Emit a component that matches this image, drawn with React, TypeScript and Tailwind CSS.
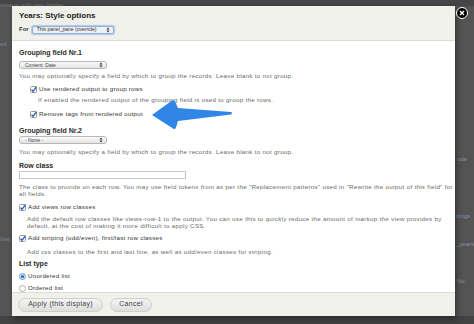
import React from 'react';

const font = { fontFamily: '"Liberation Sans", Arial, sans-serif' };

function Check({ checked = true }: { checked?: boolean }) {
  return (
    <svg width="7" height="7" viewBox="0 0 7 7" className="shrink-0">
      <rect x="0.5" y="0.5" width="6" height="6" rx="1" fill="#fff" stroke="#9a9a9a" />
      {checked && <path d="M1.5 3.6 L3 5.4 L6.6 0.6" stroke="#2a62c9" strokeWidth="1.4" fill="none" />}
    </svg>
  );
}

function Radio({ on }: { on?: boolean }) {
  return (
    <svg width="7" height="7" viewBox="0 0 7 7" className="shrink-0">
      <circle cx="3.5" cy="3.5" r="3" fill={on ? '#dce9f8' : '#fff'} stroke={on ? '#4a86d0' : '#9a9a9a'} strokeWidth="0.8" />
      {on && <circle cx="3.5" cy="3.5" r="1.5" fill="#1f5fc0" />}
    </svg>
  );
}

function Arrows() {
  return (
    <svg width="4" height="6" viewBox="0 0 4 6" className="shrink-0">
      <path d="M0.5 2.5 L2 0.5 L3.5 2.5 Z M0.5 3.5 L2 5.5 L3.5 3.5 Z" fill="#333" />
    </svg>
  );
}

function Select({ label, className = '' }: { label: string; className?: string }) {
  return (
    <div
      className={`w-[88px] h-[8px] flex items-center justify-between rounded-[3px] border border-[#b8b8b8] bg-gradient-to-b from-[#fbfbfb] to-[#e4e4e4] pl-[5px] pr-[3px] text-[5px] leading-none text-[#444] ${className}`}
    >
      <span>{label}</span>
      <Arrows />
    </div>
  );
}

function Desc({ children, className = '' }: { children: React.ReactNode; className?: string }) {
  return (
    <div className={`whitespace-nowrap text-[6.2px] leading-[7px] tracking-[0.3px] text-[#6a6a6a] ${className}`}>
      {children}
    </div>
  );
}

function Label({ children, className = '' }: { children: React.ReactNode; className?: string }) {
  return <div className={`text-[7px] leading-[9px] font-bold text-[#2a2a2a] ${className}`}>{children}</div>;
}

function CheckRow({ children, className = '' }: { children: React.ReactNode; className?: string }) {
  return (
    <div className={`flex items-center gap-[2px] h-[8px] text-[6.2px] tracking-[0.25px] text-[#333] ${className}`}>
      <Check />
      <span>{children}</span>
    </div>
  );
}

function RadioRow({ on, children, className = '' }: { on?: boolean; children: React.ReactNode; className?: string }) {
  return (
    <div className={`flex items-center gap-[2px] h-[8px] text-[6.2px] tracking-[0.25px] text-[#333] ${className}`}>
      <Radio on={on} />
      <span>{children}</span>
    </div>
  );
}

export default function App() {
  return (
    <div className="relative w-[474px] h-[324px] overflow-hidden bg-[#545454]" style={font}>
      {/* page under the overlay */}
      <div className="h-[6px] bg-[#464646]" />
      <div className="absolute left-0 top-[1px] text-[6px] text-[#7a7a7a]">elow or add new display</div>
      <div className="absolute left-0 top-[40px] text-[6px] text-[#7b8797]">ed</div>
      <div className="absolute left-0 top-[235px] text-[6px] text-[#7b8797]">ilea</div>
      <div className="absolute left-[457px] top-[155px] text-[6px] text-[#8493a6]">ode</div>
      <div className="absolute left-[456px] top-[212px] text-[6px] text-[#7e91aa]">ttings</div>
      <div className="absolute left-[456px] top-[240px] text-[6px] text-[#7e91aa]">_years</div>
      <div className="absolute left-[457px] top-[277px] text-[6px] text-[#8493a6]">No</div>
      <div className="absolute left-[358px] top-[314px] text-[6px] text-[#8a8a8a]">
        Query settings: <span className="text-[#6f86a6]">Settings</span>
      </div>
      <div className="absolute left-0 top-[316px] w-full h-[8px] bg-[#424242]" />

      {/* modal */}
      <div className="absolute left-[12px] top-[6px] w-[443px] h-[310px] flex flex-col bg-white shadow-[2px_2px_6px_rgba(0,0,0,0.4)]">
        <div className="h-[35px] shrink-0 bg-[#f1f1ec] border-b border-[#dcdcd6] px-[7px] pt-[5px]">
          <div className="text-[8px] leading-[10px] font-bold text-[#222]">Years: Style options</div>
          <div className="mt-[4px] flex items-center gap-[3px]">
            <span className="text-[6px] font-bold text-[#333]">For</span>
            <div className="w-[82px] h-[8px] flex items-center justify-between rounded-[2px] border border-[#8fb3e0] bg-[#eef0f2] pl-[4px] pr-[3px] text-[5px] leading-none text-[#333] shadow-[0_0_1px_1px_rgba(110,160,220,0.5)]">
              <span>This panel_pane (override)</span>
              <Arrows />
            </div>
          </div>
        </div>

        <div className="flex-1 px-[7px] flex flex-col items-start">
          <Label className="mt-[7px]">Grouping field Nr.1</Label>
          <Select label="Content: Date" className="mt-[4px]" />
          <Desc className="mt-[3px]">You may optionally specify a field by which to group the records. Leave blank to not group.</Desc>
          <CheckRow className="mt-[6px] ml-[11px]">Use rendered output to group rows</CheckRow>
          <Desc className="mt-[3px] ml-[19px]">If enabled the rendered output of the grouping field is used to group the rows.</Desc>
          <CheckRow className="mt-[7px] ml-[11px]">Remove tags from rendered output</CheckRow>
          <Label className="mt-[8px]">Grouping field Nr.2</Label>
          <Select label="- None -" className="mt-[1px]" />
          <Desc className="mt-[4px]">You may optionally specify a field by which to group the records. Leave blank to not group.</Desc>
          <Label className="mt-[6px]">Row class</Label>
          <div className="mt-[1px] w-[167px] h-[8px] border border-[#c4c4c4] bg-white" />
          <Desc className="mt-[4px]">
            The class to provide on each row. You may use field tokens from as per the "Replacement patterns" used in "Rewrite the output of this field" for
            <br />
            all fields.
          </Desc>
          <CheckRow className="mt-[6px]">Add views row classes</CheckRow>
          <Desc className="mt-[4px] ml-[8px]">
            Add the default row classes like views-row-1 to the output. You can use this to quickly reduce the amount of markup the view provides by
            <br />
            default, at the cost of making it more difficult to apply CSS.
          </Desc>
          <CheckRow className="mt-[5px]">Add striping (odd/even), first/last row classes</CheckRow>
          <Desc className="mt-[6px] ml-[8px]">Add css classes to the first and last line, as well as odd/even classes for striping.</Desc>
          <Label className="mt-[4px]">List type</Label>
          <RadioRow on className="mt-[4px]">Unordered list</RadioRow>
          <RadioRow className="mt-[4px]">Ordered list</RadioRow>
        </div>

        <div className="h-[24px] shrink-0 bg-[#f1f1ec] border-t border-[#dcdcd6] px-[6px] flex items-center gap-[7px]">
          <button className="h-[14px] w-[85px] rounded-full border border-[#cfcfcf] bg-gradient-to-b from-[#f4f4f4] to-[#dedede] text-[7px] tracking-[0.3px] text-[#444]">
            Apply (this display)
          </button>
          <button className="h-[14px] w-[42px] rounded-full border border-[#cfcfcf] bg-gradient-to-b from-[#f4f4f4] to-[#dedede] text-[7px] tracking-[0.3px] text-[#444]">
            Cancel
          </button>
        </div>
      </div>

      {/* close button */}
      <div className="absolute left-[456px] top-[7px] w-[12px] h-[12px] rounded-full bg-black border-[1.5px] border-white flex items-center justify-center">
        <svg width="6" height="6" viewBox="0 0 6 6">
          <path d="M1 1 L5 5 M5 1 L1 5" stroke="#fff" strokeWidth="1.4" />
        </svg>
      </div>

      {/* annotation arrow */}
      <svg className="absolute left-0 top-0" width="474" height="324" viewBox="0 0 474 324">
        <path
          d="M152 115 L172 100.5 Q174 99.5 175 101.5 L178 108 L231 112 Q233 113 231 114.5 L178 121 L176 127.5 Q175 130 173 128.5 Z"
          fill="#2f86e6"
        />
      </svg>
    </div>
  );
}
